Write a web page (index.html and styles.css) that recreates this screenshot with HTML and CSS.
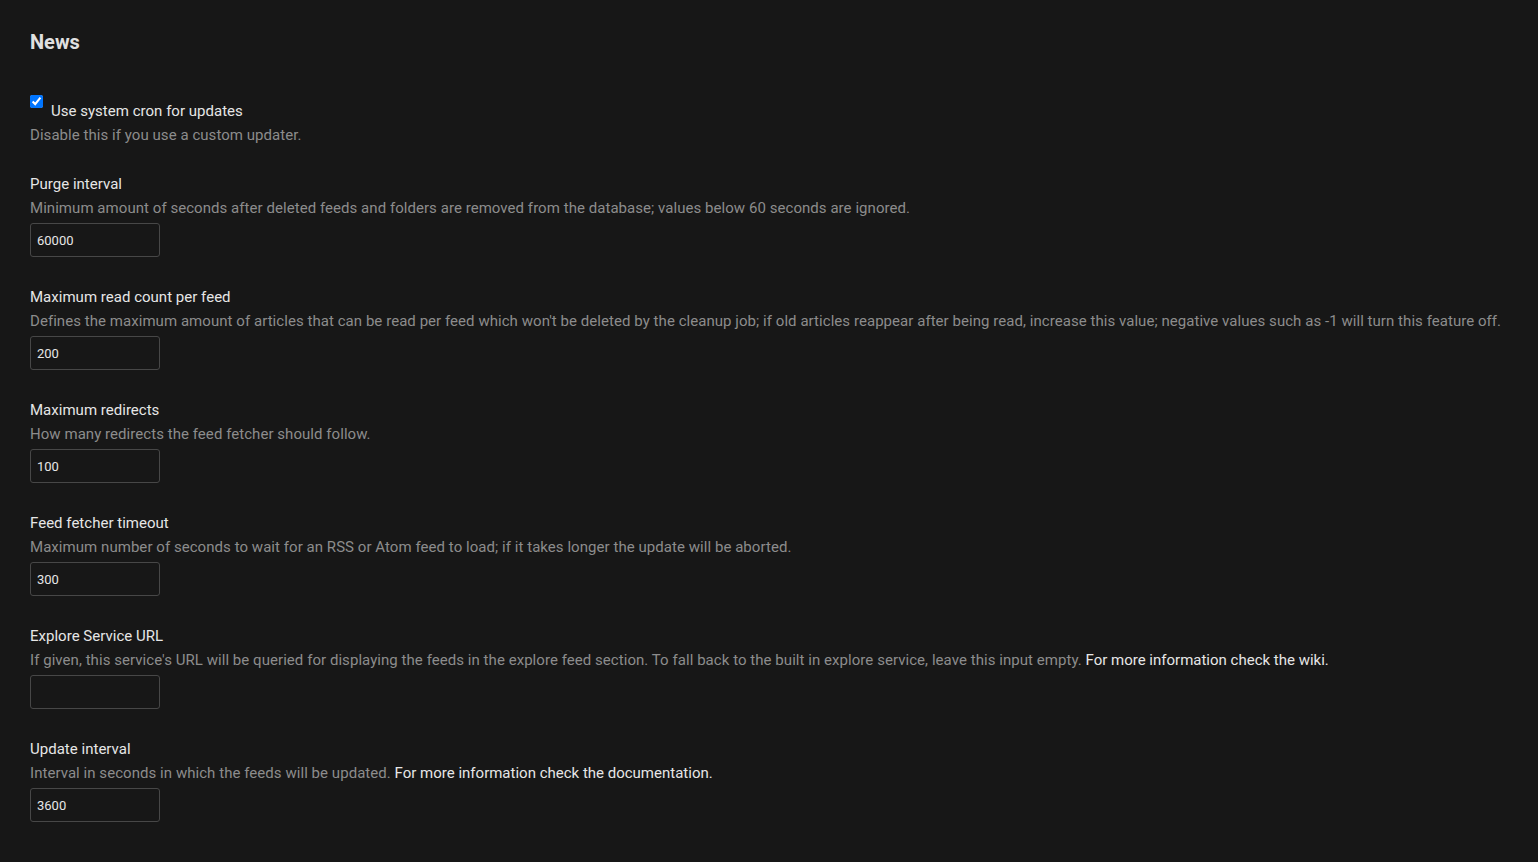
FILE: index.html
```html
<!DOCTYPE html>
<html lang="en">
<head>
<meta charset="utf-8">
<title>News</title>
<link rel="stylesheet" href="styles.css">
</head>
<body>
<div class="section">
  <h2 class="title">News</h2>

  <div class="cron">
    <div class="check-row">
      <input type="checkbox" id="cron" class="checkbox" checked>
      <label for="cron" class="label">Use system cron for updates</label>
    </div>
    <p class="desc">Disable this if you use a custom updater.</p>
  </div>

  <div class="field">
    <label class="label">Purge interval</label>
    <p class="desc">Minimum amount of seconds after deleted feeds and folders are removed from the database; values below 60 seconds are ignored.</p>
    <input class="input" type="text" value="60000">
  </div>

  <div class="field">
    <label class="label">Maximum read count per feed</label>
    <p class="desc">Defines the maximum amount of articles that can be read per feed which won't be deleted by the cleanup job; if old articles reappear after being read, increase this value; negative values such as -1 will turn this feature off.</p>
    <input class="input" type="text" value="200">
  </div>

  <div class="field">
    <label class="label">Maximum redirects</label>
    <p class="desc">How many redirects the feed fetcher should follow.</p>
    <input class="input" type="text" value="100">
  </div>

  <div class="field">
    <label class="label">Feed fetcher timeout</label>
    <p class="desc">Maximum number of seconds to wait for an RSS or Atom feed to load; if it takes longer the update will be aborted.</p>
    <input class="input" type="text" value="300">
  </div>

  <div class="field">
    <label class="label">Explore Service URL</label>
    <p class="desc">If given, this service's URL will be queried for displaying the feeds in the explore feed section. To fall back to the built in explore service, leave this input empty. <a class="link" href="#">For more information check the wiki.</a></p>
    <input class="input" type="text" value="">
  </div>

  <div class="field">
    <label class="label">Update interval</label>
    <p class="desc">Interval in seconds in which the feeds will be updated. <a class="link" href="#">For more information check the documentation.</a></p>
    <input class="input" type="text" value="3600">
  </div>
</div>
</body>
</html>
```

FILE: styles.css
```css
html, body {
  margin: 0;
  padding: 0;
  background: #171717;
  height: 100%;
}

body {
  font-family: Roboto, "Noto Sans", "Liberation Sans", sans-serif;
  font-size: 15px;
  line-height: 24px;
  color: #e6e6e6;
}

.section {
  padding: 27px 30px 30px;
  display: flex;
  flex-direction: column;
}

.title {
  margin: 0 0 38px;
  font-size: 20px;
  line-height: 30px;
  font-weight: bold;
  color: #e0e0e0;
}

.cron {
  display: flex;
  flex-direction: column;
  margin-bottom: 24px;
}

.check-row {
  display: flex;
  align-items: flex-start;
  gap: 8px;
}

.checkbox {
  margin: 0;
  width: 13px;
  height: 13px;
  accent-color: #0075ff;
}

.label {
  display: block;
  margin-top: 4px;
  letter-spacing: 0.02px;
}

.field .label {
  margin-top: 1px;
}

.desc {
  margin: 0;
  color: #8c8c8c;
  letter-spacing: 0.05px;
}

.link {
  color: #e6e6e6;
  text-decoration: none;
  letter-spacing: 0;
}

.field {
  display: flex;
  flex-direction: column;
  align-items: flex-start;
  margin-bottom: 27px;
}

.input {
  box-sizing: border-box;
  margin: 3px 0 0;
  width: 130px;
  height: 34px;
  padding: 0 6px;
  font-family: Roboto, "Noto Sans", "Liberation Sans", sans-serif;
  font-size: 13px;
  color: #e6e6e6;
  background: #171717;
  border: 1px solid #474747;
  border-radius: 3px;
  outline: none;
}
```
